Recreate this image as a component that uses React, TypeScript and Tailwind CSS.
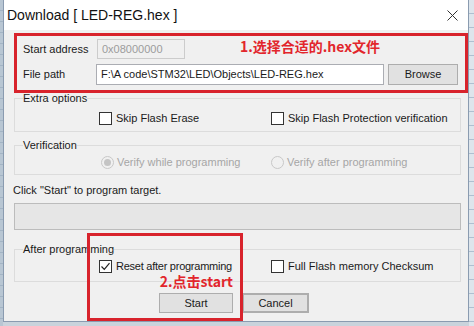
import React from "react";

const font = "font-['Liberation_Sans','Noto_Sans_CJK_SC',Arial,sans-serif]";
const cjk = "font-['Noto_Sans_CJK_SC','Liberation_Sans',sans-serif]";

function CheckBox({ checked = false, label, tight = false }: { checked?: boolean; label: string; tight?: boolean }) {
  return (
    <label
      className={
        "flex items-center gap-[4px] h-[16px] text-[11px] text-[#1a1a1a] whitespace-nowrap " +
        (tight ? "tracking-[-0.25px]" : "")
      }
    >
      <span className="flex items-center justify-center w-[13px] h-[13px] border border-[#333] bg-white shrink-0">
        {checked && (
          <svg width="11" height="11" viewBox="0 0 11 11">
            <path d="M1.5 5.5 L4.3 8.3 L9.5 2.2" fill="none" stroke="#222" strokeWidth="1.2" />
          </svg>
        )}
      </span>
      {label}
    </label>
  );
}

function Radio({ checked = false, label }: { checked?: boolean; label: string }) {
  return (
    <label className="flex items-center gap-[3px] h-[16px] text-[11px] text-[#a6a6a6] whitespace-nowrap">
      <span className="flex items-center justify-center w-[13px] h-[13px] rounded-full border border-[#c8c8c8] bg-[#f0f0f0] shrink-0">
        {checked && <span className="w-[7px] h-[7px] rounded-full bg-[#c4c4c4]" />}
      </span>
      {label}
    </label>
  );
}

function Group({ title, className = "", children }: { title: string; className?: string; children: React.ReactNode }) {
  return (
    <fieldset className={"border border-[#dcdcdc] px-[8px] " + className}>
      <legend className="px-0 h-[14px] leading-[14px] text-[11px] text-[#1a1a1a]">{title}</legend>
      {children}
    </fieldset>
  );
}

const btn =
  "flex items-center justify-center h-[20px] bg-[#e1e1e1] border border-[#adadad] text-[11px] text-[#1a1a1a]";

export default function App() {
  return (
    <div className={"w-[474px] h-[326px] flex bg-[#c9d3dc] overflow-hidden " + font}>
      {/* background window strip, left */}
      <div className="w-[3px] bg-[repeating-linear-gradient(180deg,#b8c6d3_0px,#b8c6d3_10px,#8ea2b6_11px)]" />

      <div className="relative w-[466px] h-[322px] flex flex-col border-x border-b border-[#8a9bb0] bg-[#f0f0f0]">
        {/* title bar */}
        <div className="flex items-center justify-between h-[30px] bg-white pl-[3px] pr-[10px] shrink-0">
          <span className="text-[14px] text-[#111]">Download [ LED-REG.hex ]</span>
          <svg width="11" height="11" viewBox="0 0 11 11">
            <path d="M0.5 0.5 L10.5 10.5 M10.5 0.5 L0.5 10.5" stroke="#333" strokeWidth="1" />
          </svg>
        </div>

        <div className="flex flex-col pl-[10px] pr-[7px]">
          {/* red box 1 */}
          <div className="relative z-10 mt-[3px] -mr-[7px] h-[60px] border-[3px] border-[#d8232c] bg-[#f0f0f0] pl-[6px] pr-[5px] pt-[3px] flex flex-col gap-[4px]">
            <div className="flex items-center h-[20px]">
              <span className="w-[74px] text-[11px] text-[#1a1a1a]">Start address</span>
              <div className="w-[88px] h-[20px] border border-[#cccccc] bg-[#f0f0f0] flex items-center pl-[4px] text-[11px] text-[#9c9c9c]">
                0x08000000
              </div>
              <span className={"ml-[55px] -mt-[5px] text-[14px] font-bold text-[#e2262c] " + cjk}>1.选择合适的.hex文件</span>
            </div>
            <div className="flex items-center h-[22px]">
              <span className="w-[73px] text-[11px] text-[#1a1a1a]">File path</span>
              <div className="w-[288px] h-[21px] border border-[#abadb3] bg-white flex items-center pl-[4px] text-[11px] text-[#1a1a1a]">
                F:\A code\STM32\LED\Objects\LED-REG.hex
              </div>
              <div className={btn + " ml-[4px] w-[70px] h-[21px]"}>Browse</div>
            </div>
          </div>

          <Group title="Extra options" className="-mt-[2px] pb-[5px]">
            <div className="flex pl-[76px] pt-[5px]">
              <div className="w-[172px]">
                <CheckBox label="Skip Flash Erase" />
              </div>
              <CheckBox label="Skip Flash Protection verification" />
            </div>
          </Group>

          <Group title="Verification" className="mt-[6px] pb-[4px]">
            <div className="flex pl-[78px] pt-[2px]">
              <div className="w-[170px]">
                <Radio checked label="Verify while programming" />
              </div>
              <Radio label="Verify after programming" />
            </div>
          </Group>

          <div className="mt-[8px] h-[14px] leading-[14px] text-[11px] text-[#1a1a1a] -ml-[1px]">
            Click "Start" to program target.
          </div>

          <div className="mt-[6px] h-[27px] border border-[#bcbcbc] bg-[#e6e6e6]" />

          <Group title="After programming" className="mt-[12px] pb-[7px]">
            <div className="flex pl-[76px] pt-[2px]">
              <div className="w-[172px]">
                <CheckBox checked tight label="Reset after programming" />
              </div>
              <CheckBox label="Full Flash memory Checksum" />
            </div>
          </Group>

          <div className="mt-[11px] flex pl-[145px] gap-[9px]">
            <div className={btn + " w-[74px]"}>Start</div>
            <div className={btn + " w-[67px] border-2 border-[#0078d7]"}>Cancel</div>
          </div>
        </div>

        {/* red box 2 annotation */}
        <div className="absolute left-[83px] top-[233px] w-[156px] h-[88px] border-[3px] border-[#d8232c] pt-[38px] pr-[7px] flex justify-end">
          <span className={"h-[14px] leading-[14px] text-[14px] font-bold text-[#e2262c] " + cjk}>2.点击start</span>
        </div>
      </div>

      {/* background window strip, right */}
      <div className="flex-1 bg-[repeating-linear-gradient(180deg,#dde5ec_0px,#dde5ec_13px,#7f9ab5_14px)]" />
    </div>
  );
}
